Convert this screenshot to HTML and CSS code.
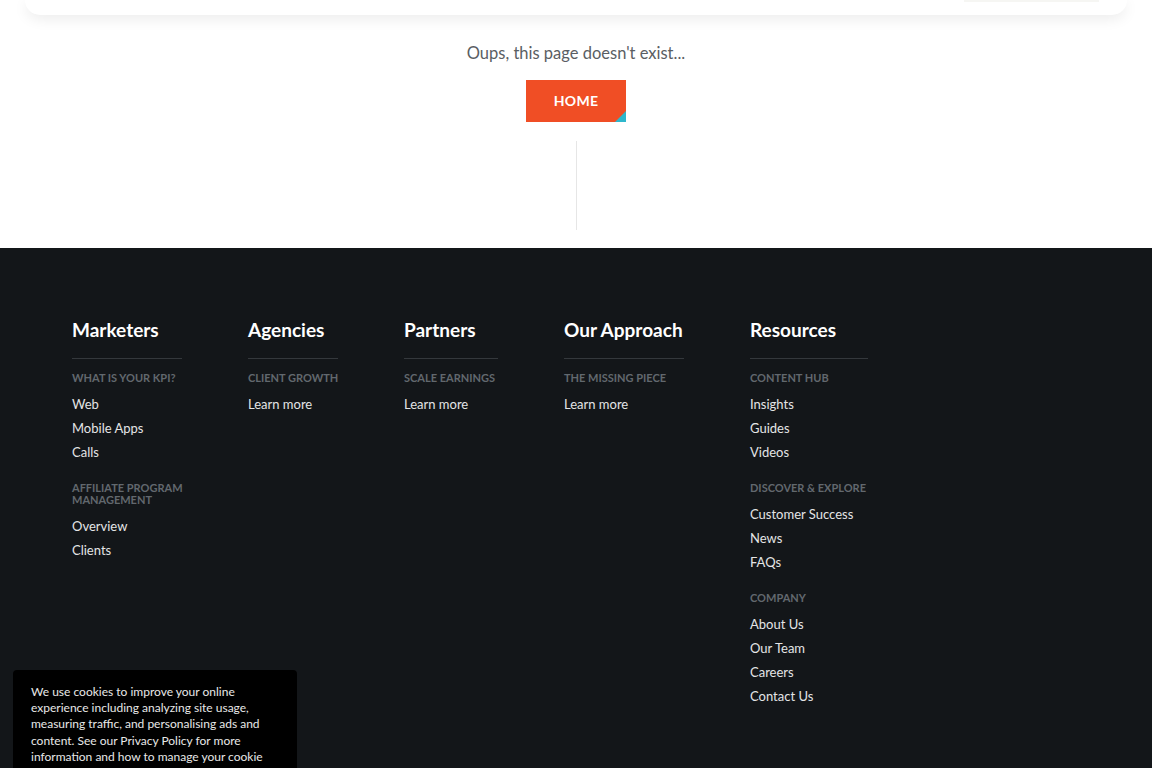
FILE: index.html
```html
<!DOCTYPE html>
<html lang="en">
<head>
<meta charset="utf-8">
<title>Page not found</title>
<link rel="stylesheet" href="styles.css">
</head>
<body>
<header class="topbar"><div class="topbar-btn"></div></header>
<main class="notfound">
  <p class="msg">Oups, this page doesn't exist...</p>
  <a class="home-btn" href="#">HOME</a>
  <div class="divider"></div>
</main>
<footer class="footer">
  <div class="cols">
    <div class="col c1">
      <h3>Marketers</h3>
      <div class="group">
        <div class="label">WHAT IS YOUR KPI?</div>
        <a href="#">Web</a><a href="#">Mobile Apps</a><a href="#">Calls</a>
      </div>
      <div class="group">
        <div class="label">AFFILIATE PROGRAM<br>MANAGEMENT</div>
        <a href="#">Overview</a><a href="#">Clients</a>
      </div>
    </div>
    <div class="col c2">
      <h3>Agencies</h3>
      <div class="group">
        <div class="label">CLIENT GROWTH</div>
        <a href="#">Learn more</a>
      </div>
    </div>
    <div class="col c3">
      <h3>Partners</h3>
      <div class="group">
        <div class="label">SCALE EARNINGS</div>
        <a href="#">Learn more</a>
      </div>
    </div>
    <div class="col c4">
      <h3>Our Approach</h3>
      <div class="group">
        <div class="label">THE MISSING PIECE</div>
        <a href="#">Learn more</a>
      </div>
    </div>
    <div class="col c5">
      <h3>Resources</h3>
      <div class="group">
        <div class="label">CONTENT HUB</div>
        <a href="#">Insights</a><a href="#">Guides</a><a href="#">Videos</a>
      </div>
      <div class="group">
        <div class="label">DISCOVER &amp; EXPLORE</div>
        <a href="#">Customer Success</a><a href="#">News</a><a href="#">FAQs</a>
      </div>
      <div class="group">
        <div class="label">COMPANY</div>
        <a href="#">About Us</a><a href="#">Our Team</a><a href="#">Careers</a><a href="#">Contact Us</a>
      </div>
    </div>
  </div>
</footer>
<div class="cookie">
  <p>We use cookies to improve your online experience including analyzing site usage, measuring traffic, and personalising ads and content. See our Privacy Policy for more information and how to manage your cookie</p>
</div>
</body>
</html>
```
FILE: styles.css
```css
html, body {
  margin: 0;
  padding: 0;
}
body {
  background: #ffffff;
  font-family: Lato, "Noto Sans", "Liberation Sans", sans-serif;
  color: #555a5f;
}
.topbar {
  height: 15px;
  margin: 0 25px;
  background: #ffffff;
  border-radius: 0 0 22px 22px;
  box-shadow: 0 4px 14px rgba(0, 0, 0, 0.08);
  position: relative;
}
.topbar-btn {
  position: absolute;
  right: 28px;
  top: 0;
  width: 135px;
  height: 2px;
  background: #f6f6f3;
}
.notfound {
  display: flex;
  flex-direction: column;
  align-items: center;
  padding-top: 26px;
  padding-bottom: 18px;
}
.msg {
  margin: 0;
  font-size: 16.5px;
  line-height: 24px;
  font-weight: 400;
  color: #5a5e63;
}
.home-btn {
  margin-top: 15px;
  width: 100px;
  height: 42px;
  background: #f04e25;
  color: #ffffff;
  text-decoration: none;
  font-weight: 700;
  font-size: 14px;
  line-height: 40px;
  display: flex;
  align-items: center;
  justify-content: center;
  position: relative;
  letter-spacing: 0.3px;
}
.home-btn::after {
  content: "";
  position: absolute;
  right: 0;
  bottom: 0;
  width: 0;
  height: 0;
  border-style: solid;
  border-width: 0 0 11px 11px;
  border-color: transparent transparent #2eb7cc transparent;
}
.divider {
  margin-top: 19px;
  width: 1px;
  height: 89px;
  background: #e6e6e6;
}
.footer {
  background: #131619;
  padding: 70px 0 90px 72px;
  min-height: 360px;
}
.cols {
  display: flex;
  gap: 66px;
  align-items: flex-start;
}
.c1 { width: 110px; }
.c2 { width: 90px; }
.c3 { width: 94px; }
.c4 { width: 120px; }
.c5 { width: 118px; }
.col h3 {
  margin: 0;
  font-size: 19px;
  line-height: 24px;
  font-weight: 700;
  color: #ffffff;
  padding-bottom: 16px;
  border-bottom: 1px solid #34383c;
  white-space: nowrap;
}
.group {
  margin-top: 18px;
  display: flex;
  flex-direction: column;
}
.col h3 + .group {
  margin-top: 13px;
}
.label {
  font-size: 11px;
  line-height: 12px;
  font-weight: 700;
  color: #62686e;
  margin-bottom: 8px;
  white-space: nowrap;
}
.group a {
  color: #e4e5e6;
  text-decoration: none;
  font-size: 13px;
  line-height: 24px;
  white-space: nowrap;
}
.cookie {
  position: fixed;
  left: 13px;
  top: 670px;
  width: 284px;
  height: 98px;
  box-sizing: border-box;
  padding: 14px 18px 0;
  background: #000000;
  border-radius: 4px 4px 0 0;
  overflow: hidden;
}
.cookie p {
  margin: 0;
  color: #e8e8e8;
  font-size: 12px;
  line-height: 16.2px;
}
```
